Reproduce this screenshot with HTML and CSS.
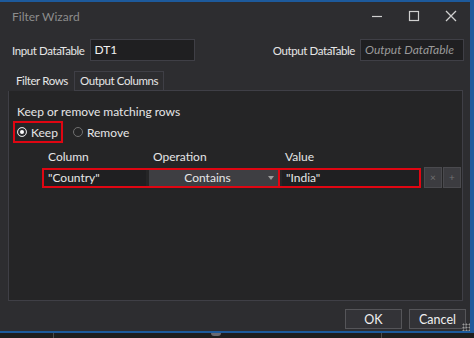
FILE: index.html
```html
<!DOCTYPE html>
<html lang="en">
<head>
    <meta charset="UTF-8">
    <title>Filter Wizard</title>
    <link rel="stylesheet" href="styles.css">
</head>
<body>

<div class="screen">
    <div class="wizard">
        <div class="wizard__title">
            <span class="wizard__name">Filter Wizard</span>
            <div class="wizard__controls">
                <svg width="12" height="12" viewBox="0 0 12 12"><path d="M1 6.5h10" stroke="#d0d0d0" stroke-width="1.2"/></svg>
                <svg width="12" height="12" viewBox="0 0 12 12"><rect x="1.5" y="1.5" width="9" height="9" fill="none" stroke="#d0d0d0" stroke-width="1.2"/></svg>
                <svg width="12" height="12" viewBox="0 0 12 12"><path d="M1 1l10 10M11 1L1 11" stroke="#d0d0d0" stroke-width="1.3"/></svg>
            </div>
        </div>

        <div class="wizard__tables">
            <label class="field">Input DataTable <span class="field__box">DT1</span></label>
            <label class="field">Output DataTable <span class="field__box field__box--hint">Output DataTable</span></label>
        </div>

        <div class="tabs">
            <div class="tabs__item tabs__item--active">Filter Rows</div>
            <div class="tabs__item">Output Columns</div>
        </div>

        <div class="panel">
            <div class="panel__caption">Keep or remove matching rows</div>
            <div class="choice">
                <div class="choice__opt choice__opt--marked"><span class="radio radio--on"></span>Keep</div>
                <div class="choice__opt"><span class="radio"></span>Remove</div>
            </div>

            <div class="rule rule--head">
                <div class="rule__col">Column</div>
                <div class="rule__op">Operation</div>
                <div class="rule__val">Value</div>
            </div>
            <div class="rule">
                <div class="rule__mark rule__mark--left">
                    <div class="rule__col rule__input">"Country"</div>
                    <div class="rule__op rule__select">Contains<span class="rule__arrow"></span></div>
                </div>
                <div class="rule__mark rule__mark--right">
                    <div class="rule__val rule__input">"India"</div>
                </div>
                <div class="rule__btn">&times;</div>
                <div class="rule__btn">+</div>
            </div>
        </div>

        <div class="wizard__footer">
            <button class="btn">OK</button>
            <button class="btn">Cancel</button>
            <span class="grip"></span>
        </div>
    </div>
    <div class="taskbar">
        <span class="taskbar__line"></span>
        <span class="taskbar__chevron"></span>
        <span class="taskbar__line taskbar__line--far"></span>
    </div>
</div>

</body>
</html>
```

FILE: styles.css
```css
*{
    box-sizing: border-box;
    margin:0;
    padding:0;
}
body{
    background:#1e1e1e;
    font-family:"Lato","Noto Sans",sans-serif;
    font-size:12px;
    color:#e6e6e6;
}
.screen{
    width:474px;
    height:338px;
    display:flex;
    flex-direction:column;
}
.wizard{
    width:474px;
    height:333px;
    background:#2d2d30;
    border-top:2px solid #1d5a9c;
    border-right:4px solid #1d5a9c;
    border-bottom:2px solid #1d5a9c;
    display:flex;
    flex-direction:column;
    position:relative;
}
.wizard__title{
    height:28px;
    display:flex;
    align-items:center;
    justify-content:space-between;
    padding:0 12px 0 12px;
}
.wizard__name{
    color:#8c8c8c;
    font-size:12px;
}
.wizard__controls{
    display:flex;
    gap:25px;
    padding-right:1px;
}

.wizard__tables{
    display:flex;
    justify-content:space-between;
    padding:9px 6px 0 12px;
}
.field{
    display:flex;
    align-items:center;
    gap:5px;
    font-size:11.5px;
    letter-spacing:-0.4px;
    white-space:nowrap;
}
.field__box{
    display:inline-block;
    flex:none;
    width:105px;
    height:22px;
    line-height:20px;
    padding:0 4px;
    background:#1f1f21;
    border:1px solid #3f3f46;
    color:#f0f0f0;
    font-size:12px;
    letter-spacing:0;
}
.field__box--hint{
    width:104px;
    font-style:italic;
    color:#9a9a9a;
}

.tabs{
    display:flex;
    padding:10px 0 0 8px;
    height:29px;
    white-space:nowrap;
    font-size:11.5px;
    letter-spacing:-0.4px;
}
.tabs__item{
    padding:0 5px 0 5px;
    line-height:18px;
    height:19px;
    border:1px solid #3f3f46;
    border-bottom:none;
}
.tabs__item--active{
    width:66px;
    height:20px;
    padding:0 0 0 7px;
    background:#2d2d30;
    border-color:#2d2d30;
    position:relative;
    z-index:1;
}

.panel{
    margin:0 7px 0 8px;
    height:211px;
    background:#252526;
    border:1px solid #3f3f46;
    padding:13px 0 0 8px;
}
.panel__caption{
    line-height:16px;
}
.choice{
    display:flex;
    align-items:center;
    gap:6px;
    margin:1px 0 0 -4px;
}
.choice__opt{
    display:flex;
    align-items:center;
    gap:4px;
    height:22px;
    padding:0 2px 0 2px;
    border:2px solid transparent;
}
.choice__opt--marked{
    padding-right:3px;
    border-color:#e00612;
}
.radio{
    flex:none;
    width:10px;
    height:10px;
    border-radius:50%;
    border:1px solid #707070;
    display:inline-block;
}
.radio--on{
    border-color:#d8d8d8;
    background:#ffffff;
    box-shadow:inset 0 0 0 2px #2d2d30;
}

.rule{
    display:flex;
    align-items:center;
    margin-left:25px;
}
.rule--head{
    height:22px;
    margin-top:2px;
}
.rule--head .rule__col{ width:105px; padding-left:6px; }
.rule--head .rule__op{ width:136px; padding-left:6px; }
.rule--head .rule__val{ padding-left:2px; }
.rule__mark{
    display:flex;
    height:20px;
    border:2px solid #e00612;
}
.rule__mark--left{
    width:238px;
    gap:3px;
}
.rule__mark--right{
    width:141px;
    border-left:none;
}
.rule__input{
    background:#1f1f21;
    line-height:16px;
    padding-left:4px;
}
.rule__mark .rule__col{ width:102px; }
.rule__mark .rule__op{ flex:1; }
.rule__mark .rule__val{ flex:1; margin-left:2px; }
.rule__select{
    background:#3e3e42;
    text-align:center;
    line-height:16px;
    padding-right:12px;
    position:relative;
}
.rule__arrow{
    position:absolute;
    right:4px;
    top:6px;
    border-left:3px solid transparent;
    border-right:3px solid transparent;
    border-top:4px solid #9a9a9a;
}
.rule__btn{
    width:18px;
    height:21px;
    margin-left:1px;
    background:#3c3c40;
    border:1px solid #4a4a4e;
    color:#707070;
    text-align:center;
    line-height:18px;
    font-size:10px;
}
.rule__mark--right + .rule__btn{ margin-left:3px; }

.wizard__footer{
    flex:1;
    display:flex;
    justify-content:flex-end;
    align-items:flex-start;
    gap:7px;
    padding:8px 4px 0 0;
    position:relative;
}
.btn{
    width:57px;
    height:20px;
    background:#333337;
    border:1px solid #555559;
    color:#f0f0f0;
    font-family:inherit;
    font-size:12.5px;
}
.grip{
    position:absolute;
    right:0;
    bottom:0;
    width:8px;
    height:8px;
    background:radial-gradient(circle,#9a9a9a 0 0.8px,transparent 1.2px) 0 0/3px 3px;
}

.taskbar{
    flex:1;
    display:flex;
    position:relative;
}
.taskbar__line{
    width:1px;
    margin-left:53px;
    background:#4a4a4a;
}
.taskbar__line--far{
    margin-left:327px;
}
.taskbar__chevron{
    position:absolute;
    left:211px;
    top:0;
    width:10px;
    height:3px;
    border-radius:0 0 5px 5px;
    background:#6a6a70;
}
```
